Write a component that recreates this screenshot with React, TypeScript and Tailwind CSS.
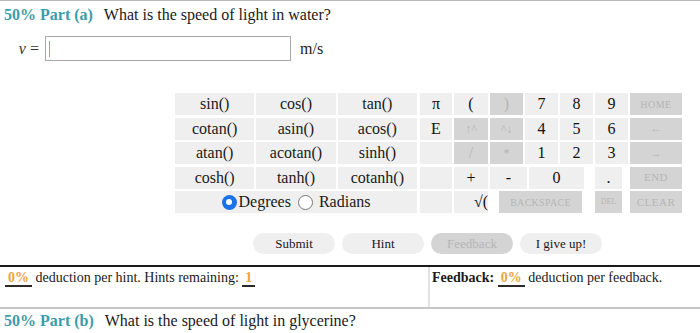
const FUNCS = [
  ["sin()", "cos()", "tan()"],
  ["cotan()", "asin()", "acos()"],
  ["atan()", "acotan()", "sinh()"],
  ["cosh()", "tanh()", "cotanh()"],
];

type Key = {
  label: string;
  dark?: boolean;
  cls?: string;
  text?: string;
};

const KEYS: Key[][] = [
  [
    { label: "π" },
    { label: "(" },
    { label: ")", dark: true },
    { label: "7" },
    { label: "8" },
    { label: "9" },
    { label: "HOME", dark: true, text: "text-[10px] tracking-[0.5px]" },
  ],
  [
    { label: "E" },
    { label: "↑^", dark: true, text: "text-[12px]" },
    { label: "^↓", dark: true, text: "text-[12px]" },
    { label: "4" },
    { label: "5" },
    { label: "6" },
    { label: "←", dark: true, text: "text-[11px]" },
  ],
  [
    { label: "" },
    { label: "/", dark: true },
    { label: "*", dark: true, text: "text-[13px]" },
    { label: "1" },
    { label: "2" },
    { label: "3" },
    { label: "→", dark: true, text: "text-[11px]" },
  ],
];

function Cell({ k }: { k: Key }) {
  return (
    <div
      className={`flex items-center justify-center h-[22px] overflow-hidden ${
        k.dark ? "bg-[#d4d4d4] text-[#b4b4b4]" : "bg-[#efefef] text-[#111]"
      } ${k.text ?? "text-[16px]"} ${k.cls ?? ""}`}
    >
      {k.label}
    </div>
  );
}

function Blank({ children }: { children: React.ReactNode }) {
  return (
    <span className="inline-block px-[3px] border-b-2 border-[#2a2a2a] leading-[15px] font-bold text-[#eda43c]">
      {children}
    </span>
  );
}

export default function App() {
  return (
    <div className="w-[700px] h-[333px] overflow-hidden bg-white text-[#1a1a1a] font-['Liberation_Serif',serif]">
      <div className="h-[1px] bg-[#b8b8b8]" />

      <div className="pt-[4px] pl-[4px] text-[16px] leading-[20px]">
        <span className="font-bold text-[#3b9cae]">50% Part (a)</span>
        <span className="ml-[11px]">What is the speed of light in water?</span>
      </div>

      <div className="mt-[11px] flex items-center h-[25px]">
        <div className="w-[45px] pr-[6px] text-right text-[16px] text-[#333]">
          <span className="italic font-['Liberation_Serif',serif]">v</span> =
        </div>
        <div className="w-[246px] h-[25px] border border-[#a8a8a8] flex items-center pl-[3px]">
          <div className="w-[1px] h-[16px] bg-[#d08a9a]" />
        </div>
        <div className="ml-[9px] text-[16px]">m/s</div>
      </div>

      <div className="mt-[32px] flex">
        <div className="ml-[175px] w-[242px] grid grid-cols-3 gap-x-[2px] gap-y-[2.5px]">
          {FUNCS.flat().map((f) => (
            <div key={f} className="h-[22px] bg-[#efefef] flex items-center justify-center text-[16px]">
              {f}
            </div>
          ))}
          <div className="col-span-3 h-[22px] bg-[#efefef] flex items-center justify-center text-[16px]">
            <span className="w-[15px] h-[15px] rounded-full bg-[#1a73e8] flex items-center justify-center">
              <span className="w-[6px] h-[6px] rounded-full bg-white" />
            </span>
            <span className="ml-[2px]">Degrees</span>
            <span className="ml-[7px] w-[15px] h-[15px] rounded-full border border-[#767676] bg-white" />
            <span className="ml-[6px]">Radians</span>
          </div>
        </div>

        <div className="ml-[3px] grid grid-cols-[32px_34px_33px_33px_33px_33px_52px] gap-x-[2px] gap-y-[2.5px]">
          {KEYS.flat().map((k, i) => (
            <Cell key={i} k={k} />
          ))}

          <Cell k={{ label: "" }} />
          <Cell k={{ label: "+" }} />
          <Cell k={{ label: "-", cls: "mr-[-4px]" }} />
          <Cell k={{ label: "0", cls: "col-span-2 ml-[4px] mr-[9px]" }} />
          <Cell k={{ label: ".", cls: "mr-[6px]" }} />
          <Cell k={{ label: "END", dark: true, text: "text-[11px] tracking-[0.5px]" }} />

          <Cell k={{ label: "" }} />
          <Cell k={{ label: "√(", cls: "justify-end pl-[14px]" }} />
          <Cell
            k={{
              label: "BACKSPACE",
              dark: true,
              text: "text-[10px] tracking-[0.3px]",
              cls: "col-span-3 ml-[9px] mr-[11px]",
            }}
          />
          <Cell k={{ label: "DEL", dark: true, text: "text-[8px]", cls: "mr-[6px]" }} />
          <Cell k={{ label: "CLEAR", dark: true, text: "text-[11px] tracking-[0.5px]" }} />
        </div>
      </div>

      <div className="mt-[20px] ml-[253px] flex gap-[7px] text-[13px]">
        <button className="w-[82px] h-[21px] rounded-full bg-[#efefef]">Submit</button>
        <button className="w-[82px] h-[21px] rounded-full bg-[#efefef]">Hint</button>
        <button className="w-[82px] h-[21px] rounded-full bg-[#d4d4d4] text-[#b4b4b4]">Feedback</button>
        <button className="w-[82px] h-[21px] rounded-full bg-[#efefef]">I give up!</button>
      </div>

      <div className="mt-[11px] h-[2px] bg-[#1a1a1a]" />

      <div className="flex h-[40px] text-[14px] leading-[16px]">
        <div className="w-[428px] pl-[5px] pt-[3px]">
          <Blank>0%</Blank> deduction per hint. Hints remaining: <Blank>1</Blank>
        </div>
        <div className="flex-1 border-l-2 border-[#e2e2e2] pl-[2px] pt-[3px]">
          <span className="font-bold">Feedback:</span> <Blank>0%</Blank> deduction per feedback.
        </div>
      </div>

      <div className="h-[2px] bg-[#c6c6c6]" />

      <div className="pt-[2px] pl-[4px] text-[16px] leading-[20px]">
        <span className="font-bold text-[#3b9cae]">50% Part (b)</span>
        <span className="ml-[11px]">What is the speed of light in glycerine?</span>
      </div>
    </div>
  );
}
